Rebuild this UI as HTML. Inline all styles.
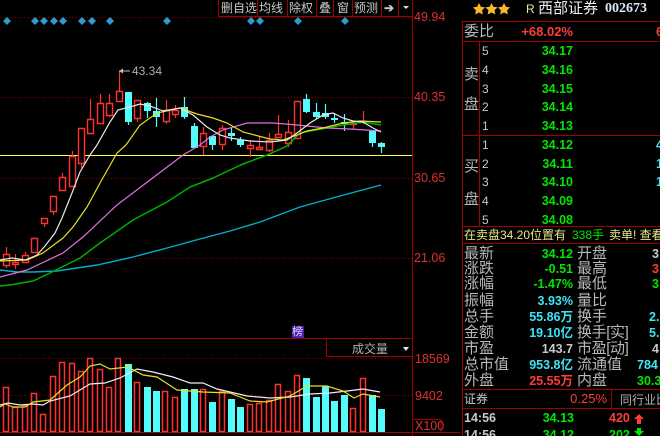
<!DOCTYPE html>
<html><head><meta charset="utf-8">
<style>
html,body{margin:0;padding:0;background:#000;width:660px;height:436px;overflow:hidden}
#r{position:relative;width:660px;height:436px;overflow:hidden;background:#000;font-family:"Liberation Sans","WenQuanYi Zen Hei","Noto Sans CJK SC",sans-serif}
.t{position:absolute;white-space:nowrap;line-height:16px;height:16px;font-size:12px;color:#c0c0c0}
.n{font-weight:bold;font-size:12.5px}
.l{font-size:15px;color:#b8b8b8}
.g{color:#00e600}.c{color:#3ce6f5}.d{color:#ff3c3c}.w{color:#c8c8c8}.y{color:#e8e888}
.sc{color:#e03030;font-size:12.5px}
svg{position:absolute;left:0;top:0}
</style></head><body><div id="r">
<svg width="660" height="436" viewBox="0 0 660 436" fill="none">
<g stroke="#800000" stroke-dasharray="1 2">
<path d="M0 17.5H412M0 97.5H412M0 178.5H412M0 258.5H412M0 358.5H412M0 395.5H412"/>
</g>
<g fill="#2b9ccb">
<path d="M7 17l4 4-4 4-4-4zM35 17l4 4-4 4-4-4zM44 17l4 4-4 4-4-4zM54 17l4 4-4 4-4-4zM63 17l4 4-4 4-4-4zM82 17l4 4-4 4-4-4zM92 17l4 4-4 4-4-4zM110 17l4 4-4 4-4-4zM167 17l4 4-4 4-4-4zM251 17l4 4-4 4-4-4zM260 17l4 4-4 4-4-4zM298 17l4 4-4 4-4-4zM345 17l4 4-4 4-4-4z"/>
</g>
<path d="M0 155.5H412" stroke="#ffff40"/>
<!-- red wicks -->
<path stroke="#ff3030" stroke-width="1.2" d="M6.5 247V268M15.5 254V269M25.5 252V262M44.5 223V227M53.5 211V215M62.5 173V177M72.5 151V156M81.5 163V168M90.5 99V119M100.5 94V103M109.5 94V117M119.5 71V91M137.5 118V122M166.5 100V124M175.5 105V118M203.5 127V155M222.5 125V150M250.5 140V157M259.5 136V150M269.5 133V152M278.5 115V137M288.5 120V147M353.5 121V129M363.5 111V124"/>
<!-- red bodies -->
<path stroke="#ff3030" stroke-width="1.4" fill="#000" d="M3.5 254.5h6v11h-6zM12.5 262.5h6v2h-6zM22.5 255.5h6v7h-6zM31.5 238.5h6v14h-6zM41.5 218.5h6v5h-6zM50.5 196.5h6v15h-6zM59.5 177.5h6v13h-6zM69.5 156.5h6v30h-6zM78.5 128.5h6v35h-6zM87.5 119.5h6v14h-6zM97.5 103.5h6v20h-6zM106.5 103.5h6v12h-6zM116.5 91.5h6v10h-6zM134.5 100.5h6v18h-6zM163.5 110.5h6v11h-6zM172.5 110.5h6v4h-6zM200.5 133.5h6v13h-6zM219.5 128.5h6v16h-6zM247.5 145.5h6v3h-6zM256.5 147.5h6v2h-6zM266.5 140.5h6v10h-6zM275.5 134.5h6v3h-6zM285.5 132.5h6v11h-6zM294.5 101.5h6v37h-6zM350.5 123.5h6v1h-6zM360.5 121.5h6v1h-6z"/>
<!-- cyan -->
<path stroke="#54fcfc" stroke-width="1.2" d="M128.5 122V125M147.5 102V118M156.5 98V127M184.5 97V119M194.5 123V127M212.5 145V150M231.5 127V141M240.5 137V147M306.5 94V113M316.5 103V119M325.5 104V119M334.5 113V123M344.5 114V131M372.5 143V147M381.5 142V153"/>
<g fill="#54fcfc"><path d="M125 92h7v30h-7zM144 103h7v8h-7zM153 111h7v6h-7zM181 107h7v10h-7zM191 126h7v22h-7zM209 136h7v9h-7zM228 133h7v3h-7zM237 140h7v5h-7zM303 99h7v13h-7zM313 112h7v5h-7zM322 113h7v4h-7zM331 118h7v2h-7zM341 122h7v2h-7zM369 131h7v12h-7zM378 143h7v4h-7z"/></g>
<!-- MAs -->
<g stroke-width="1.2">
<polyline stroke="#00b0c8" stroke-width="1.4" points="0,270 17,272 33,272 57,271 97,265 133,257 167,248 200,239 230,231 260,222 300,207 340,196 381,185"/>
<polyline stroke="#00b000" stroke-width="1.5" points="0,286 10,285 33,281 50,273 80,258 100,243 133,220 167,202 190,187 213,178 230,170 243,164 267,155 287,146 300,133 310,131 327,128 343,125 363,122 381,125"/>
<polyline stroke="#e070e0" points="0,277 27,270 63,253 83,237 117,205 150,180 183,155 200,145 210,137 223,130 247,123 273,123 297,125 327,128 350,129 381,131"/>
<polyline stroke="#e8e020" points="0,261 27,260 43,253 63,238 73,227 87,207 100,183 117,153 126,145 140,125 157,113 180,108 197,114 213,118 227,123 243,132 270,139 283,140 297,135 307,131 323,128 343,123 360,121 381,122"/>
<polyline stroke="#e8e8e8" points="0,260 12,258 25,260 30,258 37,255 45,246 55,233 62,218 72,193 80,172 90,155 97,145 110,122 118,110 130,107 140,104 150,106 163,111 180,108 193,115 207,127 220,135 230,138 250,141 270,142 287,140 297,133 310,123 323,115 333,113 343,118 353,121 363,122 373,128 381,132"/>
</g>
<path d="M119 71h11" stroke="#c0c0c0"/><path d="M119 71l4-2.500v5z" fill="#c0c0c0"/>
<!-- frame -->
<g stroke="#a00000">
<path d="M412.500 0V436M0 338.500H412M326.500 338V356.500H412M0 432.500H460M413 419.500H441V432M462.500 21V436M462 21.500H660M462 41.500H660M462 135.500H660M462 226.500H660M462 243.500H660M462 389.500H660M462 408.500H660M479.500 41V226M611.500 389V408"/>
<path d="M218.500 0V16.500H412M257.500 0V16M287.500 0V16M316.500 0V16M333.500 0V16M352.500 0V16M381.500 0V16M398.500 0V16"/>
</g>
<!-- volume -->
<path stroke="#ff3030" stroke-width="1.5" fill="#000" d="M3.500 387.500h5v44h-5zM12.500 407.500h5v24h-5zM22.500 405.500h5v26h-5zM31.500 393.500h5v38h-5zM40.500 414.500h5v17h-5zM50.500 376.500h5v55h-5zM59.500 362.500h5v69h-5zM69.500 363.500h5v68h-5zM78.500 371.500h5v60h-5zM87.500 358.500h5v73h-5zM97.500 369.500h5v62h-5zM106.500 387.500h5v44h-5zM115.500 358.500h5v73h-5zM134.500 382.500h5v49h-5zM162.500 391.500h5v40h-5zM172.500 397.500h5v34h-5zM200.500 389.500h5v42h-5zM219.500 391.500h5v40h-5zM247.500 404.500h5v27h-5zM256.500 403.500h5v28h-5zM266.500 400.500h5v31h-5zM275.500 384.500h5v47h-5zM285.500 391.500h5v40h-5zM294.500 375.500h5v56h-5zM350.500 408.500h5v23h-5zM360.500 378.500h5v53h-5z"/>
<path fill="#54fcfc" d="M125 364h7v68h-7zM144 387h7v45h-7zM153 391h7v41h-7zM181 389h7v43h-7zM191 389h7v43h-7zM209 402h7v30h-7zM228 399h7v33h-7zM237 407h7v25h-7zM303 378h7v54h-7zM313 397h7v35h-7zM322 386h7v46h-7zM331 401h7v31h-7zM341 395h7v37h-7zM369 395h7v37h-7zM378 409h7v23h-7z"/>
<polyline stroke="#f0f0f0" stroke-width="1.2" points="0,405 8,403 20,405 33,404 43,405 50,401 70,396 90,384 105,383 120,378 137,369 153,372 173,377 190,383 203,383 217,389 230,392 247,396 270,398 290,397 310,394 330,393 347,391 363,389 380,392"/>
<polyline stroke="#e8e020" stroke-width="1.2" points="0,407 5,404 13,407 25,407 33,402 50,400 67,385 80,377 90,366 100,364 110,369 128,367 143,375 157,377 177,390 203,392 230,393 240,397 250,401 267,402 290,396 307,386 327,386 343,391 354,398 363,394 380,397"/>
<path d="M403 347h6l-3 4z" fill="#e8e8e8"/>
<rect x="292" y="326" width="12" height="12" fill="#4a20a8"/>
<!-- stars -->
<g fill="#f8b828"><path d="M479 3l1.900 3.800 4.200.6-3 2.900.7 4.200-3.800-2-3.800 2 .7-4.200-3-2.900 4.200-.6z"/><path d="M491.500 3l1.900 3.800 4.200.6-3 2.900.7 4.200-3.800-2-3.800 2 .7-4.200-3-2.900 4.200-.6z"/><path d="M504 3l1.900 3.800 4.200.6-3 2.900.7 4.200-3.800-2-3.800 2 .7-4.200-3-2.900 4.200-.6z"/></g>
<!-- arrows -->
<path d="M639 414l5 5h-3v5h-4v-5h-3z" fill="#ff3c3c"/>
<path d="M639 436l5-5h-3v-3h-4v3h-3z" fill="#00e600"/>
<path d="M403 6h6l-3 3z" fill="#ddd"/>
</svg>

<span class="t" style="left:132px;top:63px;color:#b0b0b0">43.34</span>
<span class="t w" style="left:221px;top:0">删自选</span>
<span class="t w" style="left:259px;top:0">均线</span>
<span class="t w" style="left:289px;top:0">除权</span>
<span class="t w" style="left:319px;top:0">叠</span>
<span class="t w" style="left:337px;top:0">窗</span>
<span class="t w" style="left:354px;top:0">预测</span>
<span class="t w" style="left:384px;top:0;font-weight:bold">➔</span>
<span class="t sc" style="left:414px;top:9px">49.94</span>
<span class="t sc" style="left:414px;top:89px">40.35</span>
<span class="t sc" style="left:414px;top:170px">30.65</span>
<span class="t sc" style="left:414px;top:250px">21.06</span>
<span class="t sc" style="left:415px;top:351px">18569</span>
<span class="t sc" style="left:415px;top:388px">9402</span>
<span class="t sc" style="left:415px;top:418px">X100</span>
<span class="t" style="left:292px;top:324px;color:#e0d8ff;font-size:11px">榜</span>
<span class="t" style="left:352px;top:341px;color:#b0b0b0">成交量</span>

<span class="t" style="left:526px;top:1px;color:#e8e8a0;font-size:12px">R</span>
<span class="t" style="left:538px;top:1px;color:#f0f0f0;font-size:15px">西部证券</span>
<span class="t" style="left:605px;top:1px;color:#d8e8f8;font-size:14px;font-weight:bold;font-family:'Liberation Serif',serif">002673</span>

<span class="t l" style="left:464px;top:24px">委比</span>
<span class="t n d" style="right:87px;top:24px;font-size:13px">+68.02%</span>
<span class="t n d" style="left:656px;top:24px">6</span>
<span class="t l" style="left:464px;top:67px">卖</span><span class="t l" style="left:464px;top:97px">盘</span>
<span class="t l" style="left:464px;top:159px">买</span><span class="t l" style="left:464px;top:192px">盘</span>

<span class="t w" style="left:482px;top:43px">5</span><span class="t n g" style="right:87px;top:43px">34.17</span>
<span class="t w" style="left:482px;top:62px">4</span><span class="t n g" style="right:87px;top:62px">34.16</span>
<span class="t w" style="left:482px;top:81px">3</span><span class="t n g" style="right:87px;top:81px">34.15</span>
<span class="t w" style="left:482px;top:99px">2</span><span class="t n g" style="right:87px;top:99px">34.14</span>
<span class="t w" style="left:482px;top:118px">1</span><span class="t n g" style="right:87px;top:118px">34.13</span>
<span class="t w" style="left:482px;top:137px">1</span><span class="t n g" style="right:87px;top:137px">34.12</span><span class="t n c" style="left:656px;top:137px">4</span>
<span class="t w" style="left:482px;top:156px">2</span><span class="t n g" style="right:87px;top:156px">34.11</span><span class="t n c" style="left:656px;top:156px">1</span>
<span class="t w" style="left:482px;top:174px">3</span><span class="t n g" style="right:87px;top:174px">34.10</span><span class="t n c" style="left:656px;top:174px">1</span>
<span class="t w" style="left:482px;top:193px">4</span><span class="t n g" style="right:87px;top:193px">34.09</span>
<span class="t w" style="left:482px;top:212px">5</span><span class="t n g" style="right:87px;top:212px">34.08</span>

<span class="t y" style="left:464px;top:227px">在卖盘34.20位置有</span>
<span class="t g" style="left:572px;top:227px">338手</span>
<span class="t y" style="left:609px;top:227px">卖单! 查看</span>

<span class="t l" style="left:464px;top:246px">最新</span><span class="t n g" style="right:87px;top:246px">34.12</span><span class="t l" style="left:577px;top:246px">开盘</span><span class="t n w" style="left:652px;top:246px">3</span>
<span class="t l" style="left:464px;top:261px">涨跌</span><span class="t n g" style="right:87px;top:261px">-0.51</span><span class="t l" style="left:577px;top:261px">最高</span><span class="t n d" style="left:652px;top:261px">3</span>
<span class="t l" style="left:464px;top:276px">涨幅</span><span class="t n g" style="right:87px;top:276px">-1.47%</span><span class="t l" style="left:577px;top:276px">最低</span><span class="t n g" style="left:652px;top:276px">3</span>
<span class="t l" style="left:464px;top:293px">振幅</span><span class="t n c" style="right:87px;top:293px">3.93%</span><span class="t l" style="left:577px;top:293px">量比</span>
<span class="t l" style="left:464px;top:309px">总手</span><span class="t n c" style="right:87px;top:309px">55.86万</span><span class="t l" style="left:577px;top:309px">换手</span><span class="t n c" style="left:649px;top:309px">2.</span>
<span class="t l" style="left:464px;top:325px">金额</span><span class="t n c" style="right:87px;top:325px">19.10亿</span><span class="t l" style="left:577px;top:325px;letter-spacing:-.4px">换手[实]</span><span class="t n c" style="left:649px;top:325px">5.</span>
<span class="t l" style="left:464px;top:341px">市盈</span><span class="t n w" style="right:87px;top:341px">143.7</span><span class="t l" style="left:577px;top:341px;letter-spacing:-.4px">市盈[动]</span><span class="t n w" style="left:652px;top:341px">4</span>
<span class="t l" style="left:464px;top:357px">总市值</span><span class="t n c" style="right:87px;top:357px">953.8亿</span><span class="t l" style="left:577px;top:357px">流通值</span><span class="t n c" style="left:637px;top:357px">784</span>
<span class="t l" style="left:464px;top:373px">外盘</span><span class="t n d" style="right:87px;top:373px">25.55万</span><span class="t l" style="left:577px;top:373px">内盘</span><span class="t n g" style="left:637px;top:373px">30.3</span>

<span class="t w" style="left:464px;top:391px">证券</span>
<span class="t d" style="right:53px;top:391px;font-size:13px">0.25%</span>
<span class="t" style="left:620px;top:392px;color:#b0b0b0">同行业比</span>

<span class="t n w" style="left:464px;top:410px">14:56</span><span class="t n g" style="right:86px;top:410px">34.13</span><span class="t n d" style="left:609px;top:410px">420</span>
<span class="t n w" style="left:464px;top:427px">14:56</span><span class="t n g" style="right:86px;top:427px">34.12</span><span class="t n g" style="left:609px;top:427px">202</span>
</div></body></html>
